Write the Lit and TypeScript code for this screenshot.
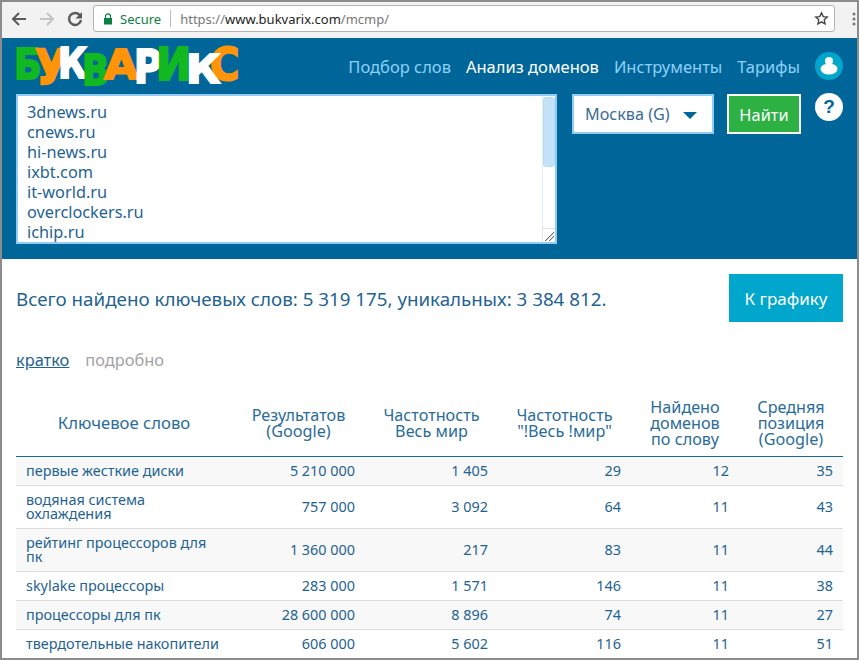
import { LitElement, html, css, svg } from 'lit';
import { customElement } from 'lit/decorators.js';

const DOMAINS = ['3dnews.ru', 'cnews.ru', 'hi-news.ru', 'ixbt.com', 'it-world.ru', 'overclockers.ru', 'ichip.ru'];

const LOGO = [
  ['Б', 'green', 'b'], ['У', 'orange', 'u'], ['К', 'white', 'k1'], ['В', 'green', 'v'], ['А', 'orange', 'a'],
  ['Р', 'white', 'r'], ['И', 'green', 'i'], ['К', 'white', 'k2'], ['С', 'orange', 's'],
];

const ROWS: string[][] = [
  ['первые жесткие диски', '5 210 000', '1 405', '29', '12', '35'],
  ['водяная система\nохлаждения', '757 000', '3 092', '64', '11', '43'],
  ['рейтинг процессоров для\nпк', '1 360 000', '217', '83', '11', '44'],
  ['skylake процессоры', '283 000', '1 571', '146', '11', '38'],
  ['процессоры для пк', '28 600 000', '8 896', '74', '11', '27'],
  ['твердотельные накопители', '606 000', '5 602', '116', '11', '51'],
];

@customElement('app-root')
export class AppRoot extends LitElement {
  static styles = css`
    :host {
      display: block;
      width: 859px;
      height: 660px;
      box-sizing: border-box;
      border: 2px solid #8c8c8c;
      overflow: hidden;
      background: #fff;
      font-family: 'Noto Sans', sans-serif;
      color: #1f6392;
    }

    .toolbar {
      height: 36px;
      box-sizing: border-box;
      background: #f2f2f2;
      display: flex;
      align-items: center;
      padding: 0 0 3px 8px;
    }
    .toolbar svg { display: block; flex: none; }
    .nav-icon { margin-right: 10px; }
    .omnibox {
      width: 742px;
      height: 27px;
      margin-left: -1px;
      background: #fff;
      border: 1px solid #b5b5b5;
      border-radius: 3px;
      box-sizing: border-box;
      display: flex;
      align-items: center;
      padding: 0 5px 0 9px;
      font-size: 13px;
    }
    .secure { color: #0b8043; margin-left: 7px; }
    .sep { width: 1px; height: 17px; background: #bbb; margin: 0 9px 0 9px; }
    .url { color: #777; }
    .url b { font-weight: 400; color: #222; }
    .star { margin-left: auto; }
    .menu { margin-left: 17px; }

    header {
      height: 221px;
      box-sizing: border-box;
      background: #006699;
      padding: 4px 14px 0 14px;
    }
    .top { display: flex; align-items: center; height: 52px; padding-bottom: 4px; box-sizing: border-box; }
    .logo {
      display: flex;
      width: 222px;
      height: 40px;
      margin-left: -2px;
      font-family: 'DejaVu Sans', sans-serif;
      font-weight: 700;
      font-size: 42px;
      line-height: 40px;
      -webkit-text-stroke: 2px currentColor;
    }
    .logo span { display: block; white-space: nowrap; }
    .green { color: #11b821; }
    .orange { color: #ff9408; }
    .white { color: #fff; }
    .b { width: 21px; transform: translate(0px, -1px) scale(0.86, 1); transform-origin: 0 50%; }
    .u { width: 23px; transform: translate(0px, 2px) scale(1, 1.15); transform-origin: 0 50%; }
    .k1 { width: 24px; transform: translate(0px, -2px) scale(0.85, 1); transform-origin: 0 50%; }
    .v { width: 22px; transform: translate(0px, 5px) scale(0.85, 1); transform-origin: 0 50%; }
    .a { width: 30px; transform: translate(0px, -1px) scale(1.05, 0.98); transform-origin: 0 50%; }
    .r { width: 22px; transform: translate(0px, 2px) scale(0.9, 1.1); transform-origin: 0 50%; }
    .i { width: 30px; transform: translate(0px, -1px) scale(1, 1.05); transform-origin: 0 50%; }
    .k2 { width: 24px; transform: translate(0px, 4px) scale(1, 0.95); transform-origin: 0 50%; z-index: 1; }
    .s { width: 26px; transform: translate(0px, -1px) scale(0.95, 1.05); transform-origin: 0 50%; }

    nav {
      margin-left: auto;
      display: flex;
      align-items: center;
      font-size: 16.5px;
      color: #8dd0f7;
      gap: 15px;
    }
    nav .active { color: #fff; }
    .avatar {
      width: 28px;
      height: 28px;
      border-radius: 50%;
      background: #00a6cc;
      display: block;
    }

    .form { display: flex; }
    .domains { position: relative; width: 541px; height: 150px; flex: none; }
    textarea {
      width: 100%;
      height: 100%;
      box-sizing: border-box;
      border: 2px solid #8fcdf5;
      padding: 6px 9px 0;
      margin: 0;
      display: block;
      font-family: 'Noto Sans', sans-serif;
      font-size: 16.3px;
      line-height: 20px;
      color: #1f6392;
      background: #fff;
      outline: none;
      resize: none;
      overflow: hidden;
    }
    .scroll {
      position: absolute;
      top: 2px;
      right: 2px;
      bottom: 2px;
      width: 13px;
      background: #fff;
      border-left: 1px solid #e4eef5;
      box-sizing: border-box;
    }
    .thumb {
      position: absolute;
      top: 1px;
      left: 0;
      right: 0;
      height: 70px;
      background: #c3e2f8;
      border: 1px solid #b8dcf6;
      border-radius: 3px;
      box-sizing: border-box;
    }
    .grip {
      position: absolute;
      left: -1px;
      right: 0;
      bottom: 0;
      height: 14px;
      border-top: 1px solid #e4e4e4;
      border-left: 1px solid #e4e4e4;
      box-sizing: border-box;
      background: linear-gradient(135deg, transparent 48%, #666 50%, transparent 58%, transparent 70%, #666 72%, transparent 80%) no-repeat right 1px bottom 1px / 9px 9px;
    }
    .select {
      width: 142px;
      height: 40px;
      box-sizing: border-box;
      margin-left: 15px;
      border: 2px solid #8fcdf5;
      background: #fff;
      display: flex;
      align-items: center;
      padding: 0 15px 0 11px;
      font-size: 16.2px;
      color: #3c6b98;
    }
    .caret {
      margin-left: auto;
      width: 0;
      height: 0;
      border-left: 7px solid transparent;
      border-right: 7px solid transparent;
      border-top: 7px solid #006699;
      margin-top: 3px;
    }
    .go {
      width: 74px;
      height: 40px;
      box-sizing: border-box;
      margin-left: 13px;
      border: 2px solid #fff;
      background: #2db143;
      color: #fff;
      display: flex;
      align-items: center;
      justify-content: center;
      font-size: 16.4px;
    }
    .help {
      width: 28px;
      height: 28px;
      margin: -1px 0 0 14px;
      border-radius: 50%;
      background: #fff;
      color: #006699;
      font-family: 'Liberation Sans', sans-serif;
      font-weight: 700;
      font-size: 19px;
      line-height: 27px;
      text-align: center;
    }

    .summary {
      display: flex;
      align-items: center;
      justify-content: space-between;
      padding: 15px 14px 0 14px;
    }
    .summary p { margin: 0; font-size: 18.75px; }
    .chart {
      width: 114px;
      height: 48px;
      background: #00a6cc;
      color: #fff;
      display: flex;
      align-items: center;
      justify-content: center;
      font-size: 17px;
    }
    .tabs {
      display: flex;
      gap: 16px;
      padding: 27px 14px 0;
      font-size: 16.4px;
      line-height: 22px;
    }
    .tabs .on { text-decoration: underline; color: #1f6392; }
    .tabs .off { color: #a3a3a3; }

    table {
      margin: 17px 0 0 14px;
      width: 827px;
      border-collapse: collapse;
      table-layout: fixed;
    }
    th {
      font-weight: 400;
      font-size: 16.2px;
      line-height: 16px;
      text-align: center;
      vertical-align: middle;
      padding: 2px 0 0;
      height: 68px;
      box-sizing: border-box;
      border-bottom: 1px solid #1a6a96;
      color: #2a6c99;
    }
    th:first-child { font-size: 16.7px; }
    td {
      font-size: 14.4px;
      line-height: 14px;
      text-align: right;
      padding: 7px 10px;
      border-bottom: 1px solid #dcdcdc;
      color: #1f6392;
      white-space: nowrap;
    }
    td:first-child { text-align: left; white-space: pre-line; }
    tbody tr:nth-child(odd) { background: #f8f8f8; }
  `;

  render() {
    return html`
      <div class="toolbar">
        <svg class="nav-icon" width="18" height="18" viewBox="0 0 18 18" fill="none" stroke="#5a5a5a" stroke-width="2">
          <path d="M16 9H3M9 3L3 9l6 6" />
        </svg>
        <svg class="nav-icon" width="18" height="18" viewBox="0 0 18 18" fill="none" stroke="#c4c4c4" stroke-width="2">
          <path d="M2 9h13M9 3l6 6-6 6" />
        </svg>
        <svg class="nav-icon" width="18" height="18" viewBox="0 0 18 18" fill="none" stroke="#5a5a5a" stroke-width="2.400">
          <path d="M14 5.500A6 6 0 1 0 15 10" />
          <path d="M16 2v6.500h-6.500z" fill="#5a5a5a" stroke="none" />
        </svg>
        <div class="omnibox">
          <svg width="10" height="12" viewBox="0 0 10 12">
            <path d="M2.500 5V3.400a2.500 2.500 0 0 1 5 0V5" fill="none" stroke="#0b8043" stroke-width="1.200" />
            <rect x="1" y="5" width="8" height="6.500" fill="#0b8043" />
          </svg>
          <span class="secure">Secure</span>
          <span class="sep"></span>
          <span class="url">https://<b>www.bukvarix.com</b>/mcmp/</span>
          <svg class="star" width="15" height="15" viewBox="0 0 24 24" fill="none" stroke="#444" stroke-width="2.200">
            <path d="M12 3l2.800 6 6.400.7-4.800 4.400 1.300 6.500L12 17.400l-5.700 3.200 1.300-6.500-4.800-4.400L9.200 9z" />
          </svg>
        </div>
        <svg class="menu" width="4" height="14" viewBox="0 0 4 14" fill="#777">
          <circle cx="2" cy="2" r="1.500" /><circle cx="2" cy="7" r="1.500" /><circle cx="2" cy="12" r="1.500" />
        </svg>
      </div>
      <header>
        <div class="top">
          <div class="logo">
            ${LOGO.map(([ch, color, cls]) => html`<span class="${color} ${cls}">${ch}</span>`)}
          </div>
          <nav>
            <span>Подбор слов</span>
            <span class="active">Анализ доменов</span>
            <span>Инструменты</span>
            <span>Тарифы</span>
            <svg class="avatar" viewBox="0 0 28 28">
              ${svg`<circle cx="14" cy="9" r="4" fill="#fff" /><ellipse cx="14" cy="17" rx="8.500" ry="5.500" fill="#fff" />`}
            </svg>
          </nav>
        </div>
        <div class="form">
          <div class="domains">
            <textarea spellcheck="false" .value=${DOMAINS.join('\n')}></textarea>
            <div class="scroll"><div class="thumb"></div><div class="grip"></div></div>
          </div>
          <div class="select">Москва (G)<span class="caret"></span></div>
          <div class="go">Найти</div>
          <div class="help">?</div>
        </div>
      </header>
      <section class="summary">
        <p>Всего найдено ключевых слов: 5 319 175, уникальных: 3 384 812.</p>
        <div class="chart">К графику</div>
      </section>
      <div class="tabs"><span class="on">кратко</span><span class="off">подробно</span></div>
      <table>
        <colgroup>
          <col style="width:216px" /><col style="width:133px" /><col style="width:133px" />
          <col style="width:133px" /><col style="width:108px" /><col style="width:104px" />
        </colgroup>
        <thead>
          <tr>
            <th>Ключевое слово</th>
            <th>Результатов<br />(Google)</th>
            <th>Частотность<br />Весь мир</th>
            <th>Частотность<br />"!Весь !мир"</th>
            <th>Найдено<br />доменов<br />по слову</th>
            <th>Средняя<br />позиция<br />(Google)</th>
          </tr>
        </thead>
        <tbody>
          ${ROWS.map((r) => html`<tr>${r.map((c) => html`<td>${c}</td>`)}</tr>`)}
        </tbody>
      </table>
    `;
  }
}

declare global {
  interface HTMLElementTagNameMap {
    'app-root': AppRoot;
  }
}
